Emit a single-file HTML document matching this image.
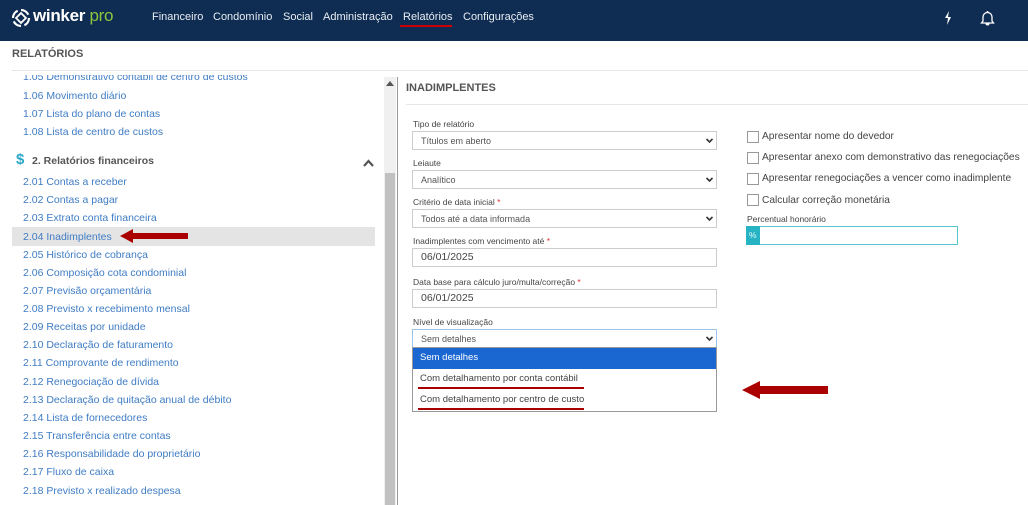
<!DOCTYPE html>
<html><head><meta charset="utf-8"><style>
*{margin:0;padding:0;box-sizing:border-box}
body{width:1028px;height:505px;overflow:hidden;background:#fff;font-family:"Liberation Sans",sans-serif;position:relative;color:#555}
.a{position:absolute;white-space:nowrap}
.hdr{position:absolute;left:0;top:0;width:1028px;height:41px;background:#0f2d52}
.nav{top:11px;font-size:11px;color:#e8edf3}
.li{left:23px;font-size:10.5px;color:#3f7cc4}
.lbl{left:413px;font-size:8.5px;color:#444}
.box{position:absolute;left:412px;width:305px;height:19px;border:1px solid #ccc;background:#fff;font-size:9px;color:#555;padding:4px 0 0 8px}
.box.dt{font-size:10.5px;padding-top:2px;color:#444}
.chev{position:absolute;right:3px;top:5px;width:7px;height:7px}
.cb{position:absolute;left:747px;width:12px;height:12px;border:1px solid #999;background:#fff}
.ct{left:762px;font-size:10.2px;color:#444}
.st{color:#d33}
</style></head><body>
<div class="hdr"></div>
<svg class="a" style="left:11px;top:8px" width="20" height="20" viewBox="0 0 20 20"><circle cx="10" cy="10" r="8" fill="none" stroke="#fff" stroke-width="2.2" stroke-dasharray="9 3.5"/><rect x="6.5" y="6.5" width="7" height="7" transform="rotate(45 10 10)" fill="none" stroke="#fff" stroke-width="1.8"/></svg>
<div class="a" style="left:33px;top:6px;font-size:17px;font-weight:bold;color:#fff;letter-spacing:-0.3px">winker <span style="color:#8cc63f;font-weight:normal">pro</span></div>
<div class="a nav" style="left:152px">Financeiro</div>
<div class="a nav" style="left:213px">Condomínio</div>
<div class="a nav" style="left:283px">Social</div>
<div class="a nav" style="left:323px">Administração</div>
<div class="a nav" style="left:403px">Relatórios</div>
<div class="a" style="left:400px;top:25px;width:52px;height:2px;background:#c00"></div>
<div class="a nav" style="left:463px">Configurações</div>
<svg class="a" style="left:944px;top:11px" width="8" height="14" viewBox="0 0 8 14"><path d="M5 0 L1 7 H4 L3 14 L7 6 H4 Z" fill="#fff"/></svg>
<svg class="a" style="left:980px;top:10px" width="15" height="16" viewBox="0 0 15 16"><path d="M3 11 V7 a4.5 4.5 0 0 1 9 0 V11 L13.5 13 H1.5 Z" fill="none" stroke="#fff" stroke-width="1.3"/><path d="M5.5 13.5 a2 2 0 0 0 4 0" fill="#fff"/><circle cx="7.5" cy="2" r="1" fill="#fff"/></svg>

<div class="a" style="left:12px;top:48px;font-size:11px;font-weight:bold;color:#555">RELATÓRIOS</div>
<div class="a" style="left:12px;top:70px;width:1016px;height:1px;background:#e6e6e6"></div>

<div class="a li" style="top:71px;clip-path:inset(4px 0 0 0)">1.05 Demonstrativo contábil de centro de custos</div>
<div class="a li" style="top:90px">1.06 Movimento diário</div>
<div class="a li" style="top:108px">1.07 Lista do plano de contas</div>
<div class="a li" style="top:126px">1.08 Lista de centro de custos</div>
<div class="a" style="left:16px;top:151px;font-size:15px;color:#2aa8c9;font-weight:bold">$</div>
<div class="a" style="left:32px;top:155px;font-size:10.5px;font-weight:bold;color:#555">2. Relatórios financeiros</div>
<svg class="a" style="left:363px;top:159px" width="11" height="8" viewBox="0 0 11 8"><path d="M1 7 L5.5 2 L10 7" fill="none" stroke="#555" stroke-width="2.2"/></svg>
<div class="a" style="left:12px;top:227px;width:363px;height:19px;background:#e4e4e4"></div>
<div class="a li" style="top:176px">2.01 Contas a receber</div>
<div class="a li" style="top:194px">2.02 Contas a pagar</div>
<div class="a li" style="top:212px">2.03 Extrato conta financeira</div>
<div class="a li" style="top:231px">2.04 Inadimplentes</div>
<div class="a li" style="top:249px">2.05 Histórico de cobrança</div>
<div class="a li" style="top:267px">2.06 Composição cota condominial</div>
<div class="a li" style="top:285px">2.07 Previsão orçamentária</div>
<div class="a li" style="top:303px">2.08 Previsto x recebimento mensal</div>
<div class="a li" style="top:321px">2.09 Receitas por unidade</div>
<div class="a li" style="top:339px">2.10 Declaração de faturamento</div>
<div class="a li" style="top:357px">2.11 Comprovante de rendimento</div>
<div class="a li" style="top:376px">2.12 Renegociação de dívida</div>
<div class="a li" style="top:394px">2.13 Declaração de quitação anual de débito</div>
<div class="a li" style="top:412px">2.14 Lista de fornecedores</div>
<div class="a li" style="top:430px">2.15 Transferência entre contas</div>
<div class="a li" style="top:448px">2.16 Responsabilidade do proprietário</div>
<div class="a li" style="top:466px">2.17 Fluxo de caixa</div>
<div class="a li" style="top:485px">2.18 Previsto x realizado despesa</div>
<svg class="a" style="left:120px;top:228px" width="68" height="16" viewBox="0 0 68 16"><path d="M0 8 L13 1 V5 H68 V11 H13 V15 Z" fill="#aa0000"/></svg>

<div class="a" style="left:384px;top:77px;width:12px;height:428px;background:#f0f0f0"></div>
<div class="a" style="left:385px;top:173px;width:10px;height:332px;background:#c1c1c1"></div>
<svg class="a" style="left:386px;top:81px" width="8" height="5"><path d="M0 5 L4 0 L8 5Z" fill="#555"/></svg>
<div class="a" style="left:397px;top:77px;width:1px;height:428px;background:#999"></div>

<div class="a" style="left:406px;top:82px;font-size:11px;font-weight:bold;color:#555">INADIMPLENTES</div>
<div class="a" style="left:406px;top:104px;width:622px;height:1px;background:#e6e6e6"></div>

<div class="a lbl" style="top:119px">Tipo de relatório</div>
<div class="box" style="top:131px">Títulos em aberto<svg class="chev" viewBox="0 0 7 7"><path d="M0.5 2 L3.5 5 L6.5 2" fill="none" stroke="#333" stroke-width="1.6"/></svg></div>
<div class="a lbl" style="top:158px">Leiaute</div>
<div class="box" style="top:170px">Analítico<svg class="chev" viewBox="0 0 7 7"><path d="M0.5 2 L3.5 5 L6.5 2" fill="none" stroke="#333" stroke-width="1.6"/></svg></div>
<div class="a lbl" style="top:197px">Critério de data inicial <span class="st">*</span></div>
<div class="box" style="top:209px">Todos até a data informada<svg class="chev" viewBox="0 0 7 7"><path d="M0.5 2 L3.5 5 L6.5 2" fill="none" stroke="#333" stroke-width="1.6"/></svg></div>
<div class="a lbl" style="top:236px">Inadimplentes com vencimento até <span class="st">*</span></div>
<div class="box dt" style="top:248px">06/01/2025</div>
<div class="a lbl" style="top:277px">Data base para cálculo juro/multa/correção <span class="st">*</span></div>
<div class="box dt" style="top:289px">06/01/2025</div>
<div class="a lbl" style="top:317px">Nível de visualização</div>
<div class="box" style="top:329px;border-color:#9cc3ec">Sem detalhes<svg class="chev" viewBox="0 0 7 7"><path d="M0.5 2 L3.5 5 L6.5 2" fill="none" stroke="#333" stroke-width="1.6"/></svg></div>
<div class="a" style="left:412px;top:347px;width:305px;height:65px;border:1px solid #999;background:#fff"></div>
<div class="a" style="left:413px;top:348px;width:303px;height:21px;background:#1a67d2"></div>
<div class="a" style="left:420px;top:352px;font-size:9.5px;color:#fff">Sem detalhes</div>
<div class="a" style="left:420px;top:373px;font-size:9.5px;color:#444">Com detalhamento por conta contábil</div>
<div class="a" style="left:418px;top:387px;width:166px;height:2px;background:#aa0000"></div>
<div class="a" style="left:420px;top:394px;font-size:9.5px;color:#444">Com detalhamento por centro de custo</div>
<div class="a" style="left:418px;top:408px;width:166px;height:2px;background:#aa0000"></div>
<svg class="a" style="left:742px;top:380px" width="86" height="20" viewBox="0 0 86 20"><path d="M0 10 L18 1 V6 H86 V14 H18 V19 Z" fill="#aa0000"/></svg>

<div class="cb" style="top:131px"></div><div class="a ct" style="top:131px">Apresentar nome do devedor</div>
<div class="cb" style="top:152px"></div><div class="a ct" style="top:152px">Apresentar anexo com demonstrativo das renegociações</div>
<div class="cb" style="top:173px"></div><div class="a ct" style="top:173px">Apresentar renegociações a vencer como inadimplente</div>
<div class="cb" style="top:194px"></div><div class="a ct" style="top:195px">Calcular correção monetária</div>
<div class="a" style="left:747px;top:214px;font-size:8.5px;color:#444">Percentual honorário</div>
<div class="a" style="left:746px;top:226px;width:212px;height:19px;border:1px solid #5bc4d1;background:#fff"></div>
<div class="a" style="left:746px;top:226px;width:14px;height:19px;background:#26b3c4;color:#e8fafc;font-size:8.5px;padding:4px 0 0 3px">%</div>
</body></html>
